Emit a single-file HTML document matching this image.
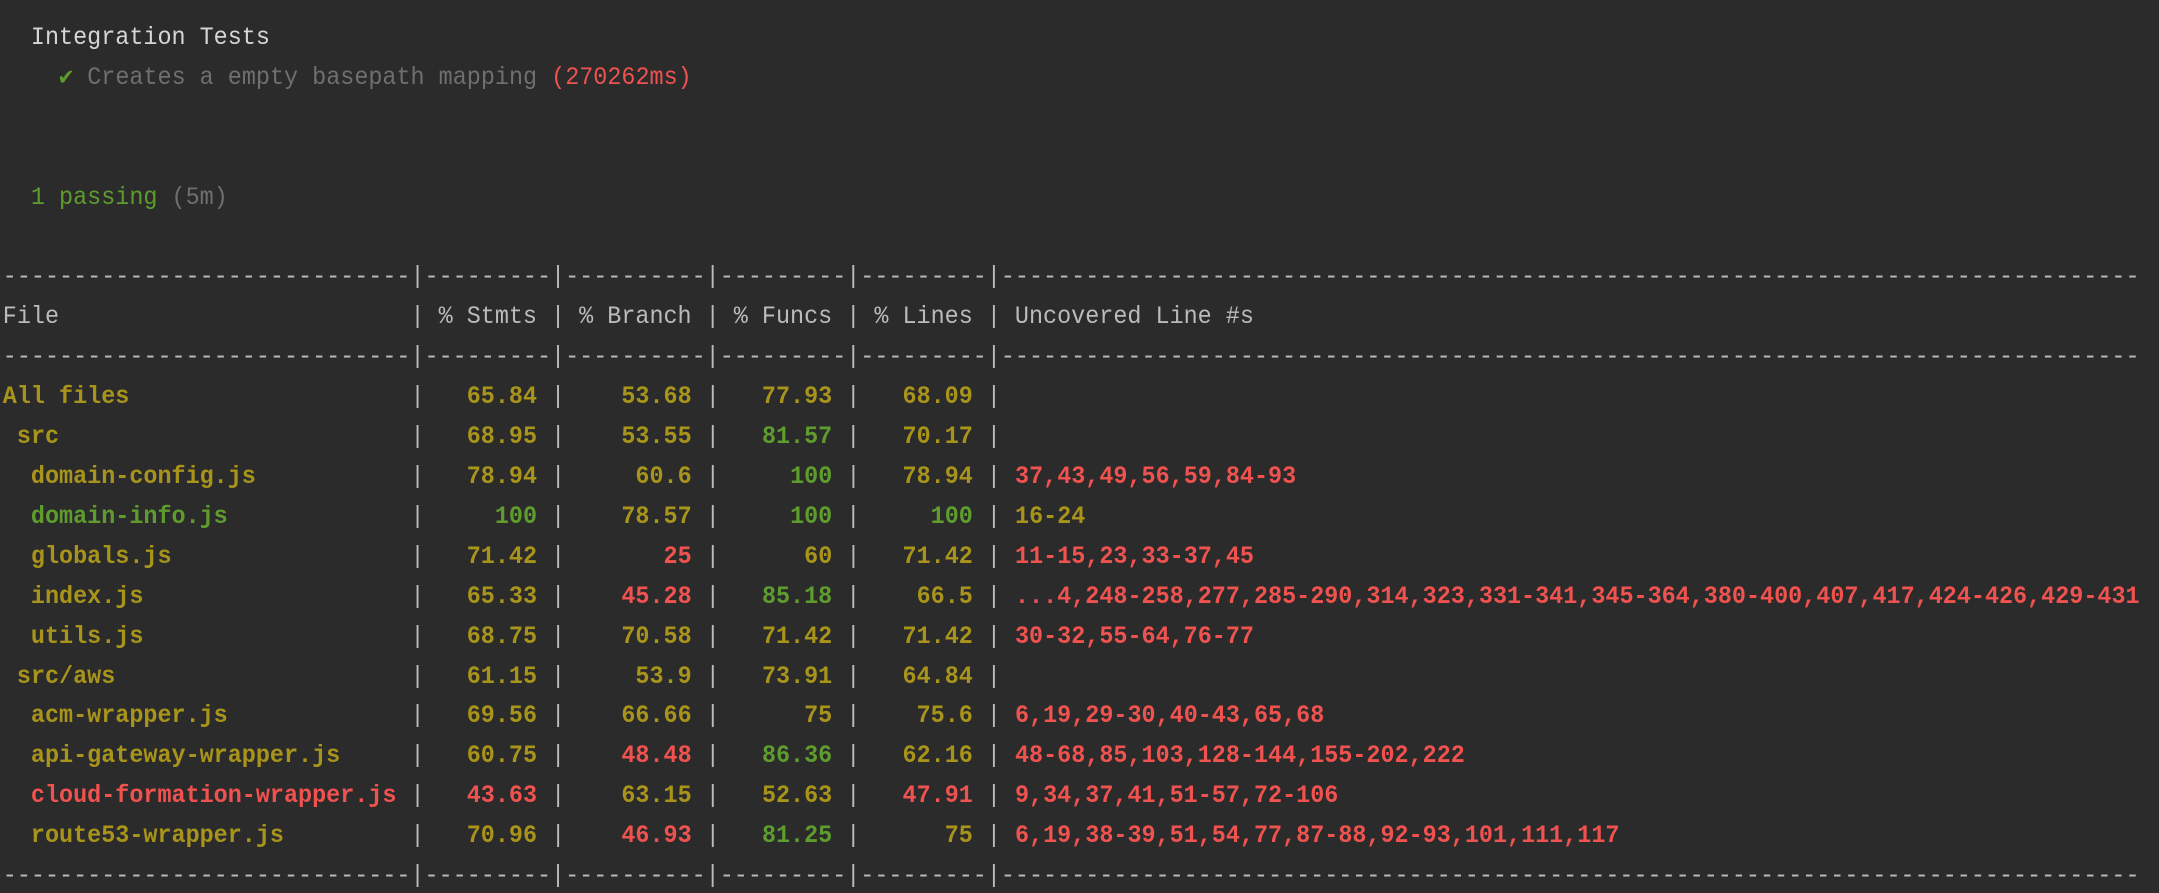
<!DOCTYPE html>
<html><head><meta charset="utf-8"><style>
html,body{margin:0;padding:0;background:#2b2b2b;width:2159px;height:893px;overflow:hidden}
pre{margin:0;padding:18px 0 0 3px;font-family:"Liberation Mono","DejaVu Sans Mono",monospace;font-size:25px;line-height:39.9px;color:#bbbbbb;white-space:pre;transform:scaleX(0.937);transform-origin:0 0;width:2400px}
.w{color:#d6d6d6}.g{color:#5e9c2d}.gr{color:#6f6f6f}.r{color:#f0524f}.y{color:#a8941a}
.b .y,.b .g,.b .r{font-weight:bold}
</style></head><body><pre>  <span class="w">Integration Tests</span>
    <span class="g">✔</span> <span class="gr">Creates a empty basepath mapping</span> <span class="r">(270262ms)</span>


  <span class="g">1 passing</span> <span class="gr">(5m)</span>

-----------------------------|---------|----------|---------|---------|---------------------------------------------------------------------------------
File                         | % Stmts | % Branch | % Funcs | % Lines | Uncovered Line #s
-----------------------------|---------|----------|---------|---------|---------------------------------------------------------------------------------
<span class="b"><span class="y">All files</span>                    |   <span class="y">65.84</span> |    <span class="y">53.68</span> |   <span class="y">77.93</span> |   <span class="y">68.09</span> |
 <span class="y">src</span>                         |   <span class="y">68.95</span> |    <span class="y">53.55</span> |   <span class="g">81.57</span> |   <span class="y">70.17</span> |
  <span class="y">domain-config.js</span>           |   <span class="y">78.94</span> |     <span class="y">60.6</span> |     <span class="g">100</span> |   <span class="y">78.94</span> | <span class="r">37,43,49,56,59,84-93</span>
  <span class="g">domain-info.js</span>             |     <span class="g">100</span> |    <span class="y">78.57</span> |     <span class="g">100</span> |     <span class="g">100</span> | <span class="y">16-24</span>
  <span class="y">globals.js</span>                 |   <span class="y">71.42</span> |       <span class="r">25</span> |      <span class="y">60</span> |   <span class="y">71.42</span> | <span class="r">11-15,23,33-37,45</span>
  <span class="y">index.js</span>                   |   <span class="y">65.33</span> |    <span class="r">45.28</span> |   <span class="g">85.18</span> |    <span class="y">66.5</span> | <span class="r">...4,248-258,277,285-290,314,323,331-341,345-364,380-400,407,417,424-426,429-431</span>
  <span class="y">utils.js</span>                   |   <span class="y">68.75</span> |    <span class="y">70.58</span> |   <span class="y">71.42</span> |   <span class="y">71.42</span> | <span class="r">30-32,55-64,76-77</span>
 <span class="y">src/aws</span>                     |   <span class="y">61.15</span> |     <span class="y">53.9</span> |   <span class="y">73.91</span> |   <span class="y">64.84</span> |
  <span class="y">acm-wrapper.js</span>             |   <span class="y">69.56</span> |    <span class="y">66.66</span> |      <span class="y">75</span> |    <span class="y">75.6</span> | <span class="r">6,19,29-30,40-43,65,68</span>
  <span class="y">api-gateway-wrapper.js</span>     |   <span class="y">60.75</span> |    <span class="r">48.48</span> |   <span class="g">86.36</span> |   <span class="y">62.16</span> | <span class="r">48-68,85,103,128-144,155-202,222</span>
  <span class="r">cloud-formation-wrapper.js</span> |   <span class="r">43.63</span> |    <span class="y">63.15</span> |   <span class="y">52.63</span> |   <span class="r">47.91</span> | <span class="r">9,34,37,41,51-57,72-106</span>
  <span class="y">route53-wrapper.js</span>         |   <span class="y">70.96</span> |    <span class="r">46.93</span> |   <span class="g">81.25</span> |      <span class="y">75</span> | <span class="r">6,19,38-39,51,54,77,87-88,92-93,101,111,117</span></span>
-----------------------------|---------|----------|---------|---------|---------------------------------------------------------------------------------
</pre></body></html>
